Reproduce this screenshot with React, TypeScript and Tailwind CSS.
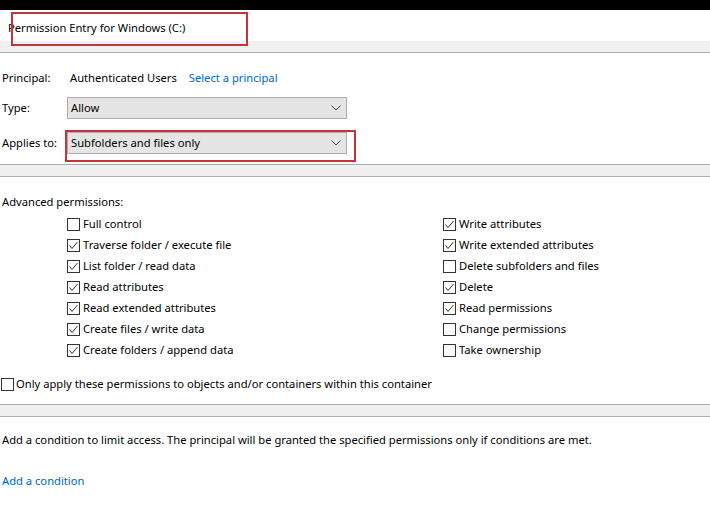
import React from "react";

const font = { fontFamily: '"Noto Sans", "Segoe UI", sans-serif' };

function Check({ checked }: { checked: boolean }) {
  return (
    <span className="w-[13px] h-[13px] border border-[#333333] bg-white flex-none flex items-center justify-center">
      {checked && (
        <svg width="11" height="11" viewBox="0 0 11 11">
          <polyline points="1.5,5.5 4,8.5 9.5,2" fill="none" stroke="#333333" strokeWidth="1" />
        </svg>
      )}
    </span>
  );
}

function Item({ label, checked }: { label: string; checked: boolean }) {
  return (
    <div className="h-[21px] flex items-center gap-[3px]">
      <Check checked={checked} />
      <span>{label}</span>
    </div>
  );
}

function Select({ value }: { value: string }) {
  return (
    <div className="w-[280px] h-[22px] bg-[#e5e5e5] border border-[#adadad] flex items-center justify-between pl-[3px] pr-[5px]">
      <span>{value}</span>
      <svg width="10" height="6" viewBox="0 0 10 6">
        <polyline points="0.5,0.5 5,5 9.5,0.5" fill="none" stroke="#444444" strokeWidth="1" />
      </svg>
    </div>
  );
}

function Separator() {
  return <div className="h-[13px] border-y border-[#adadad] bg-[#f0f0f0]" />;
}

const left: [string, boolean][] = [
  ["Full control", false],
  ["Traverse folder / execute file", true],
  ["List folder / read data", true],
  ["Read attributes", true],
  ["Read extended attributes", true],
  ["Create files / write data", true],
  ["Create folders / append data", true],
];
const right: [string, boolean][] = [
  ["Write attributes", true],
  ["Write extended attributes", true],
  ["Delete subfolders and files", false],
  ["Delete", true],
  ["Read permissions", true],
  ["Change permissions", false],
  ["Take ownership", false],
];

export default function App() {
  return (
    <div className="w-[710px] h-[506px] bg-white text-[11.2px] text-black overflow-hidden" style={font}>
      <div className="h-[10px] bg-black" />
      <div className="relative">
        <div className="h-[31px] flex items-end pl-[8px] pb-[4px]">Permission Entry for Windows (C:)</div>
        <div className="h-[12px] bg-[#f0f0f0] border-b border-[#adadad]" />
        <div className="absolute left-[11px] top-[2px] w-[237px] h-[34px] border-2 border-[#c8323c]" />
      </div>

      <div className="pl-[2px] pt-[15px]">
        <div className="h-[20px] flex items-center">
          <span className="w-[68px]">Principal:</span>
          <span>Authenticated Users</span>
          <span className="ml-[12px] text-[#0066cc]">Select a principal</span>
        </div>
        <div className="mt-[9px] flex items-center">
          <span className="w-[65px]">Type:</span>
          <Select value="Allow" />
        </div>
        <div className="mt-[13px] flex items-center">
          <span className="w-[65px]">Applies to:</span>
          <div className="relative">
            <Select value="Subfolders and files only" />
            <div className="absolute -left-[2px] -top-[2px] w-[291px] h-[32px] border-2 border-[#c8323c]" />
          </div>
        </div>
      </div>

      <div className="mt-[10px]">
        <Separator />
      </div>

      <div className="pl-[2px] pt-[15px] h-[20px] box-content flex items-center">Advanced permissions:</div>
      <div className="pl-[67px] mt-[2px] flex">
        <div className="w-[376px]">
          {left.map(([l, c]) => (
            <Item key={l} label={l} checked={c} />
          ))}
        </div>
        <div>
          {right.map(([l, c]) => (
            <Item key={l} label={l} checked={c} />
          ))}
        </div>
      </div>
      <div className="pl-[1px] mt-[13px] h-[20px] flex items-center gap-[2px]">
        <Check checked={false} />
        <span>Only apply these permissions to objects and/or containers within this container</span>
      </div>

      <div className="mt-[10px]">
        <Separator />
      </div>

      <div className="pl-[2px] mt-[13px] h-[20px] flex items-center">
        Add a condition to limit access. The principal will be granted the specified permissions only if conditions are met.
      </div>
      <div className="pl-[2px] mt-[21px] h-[20px] flex items-center text-[#0066cc]">Add a condition</div>
    </div>
  );
}
